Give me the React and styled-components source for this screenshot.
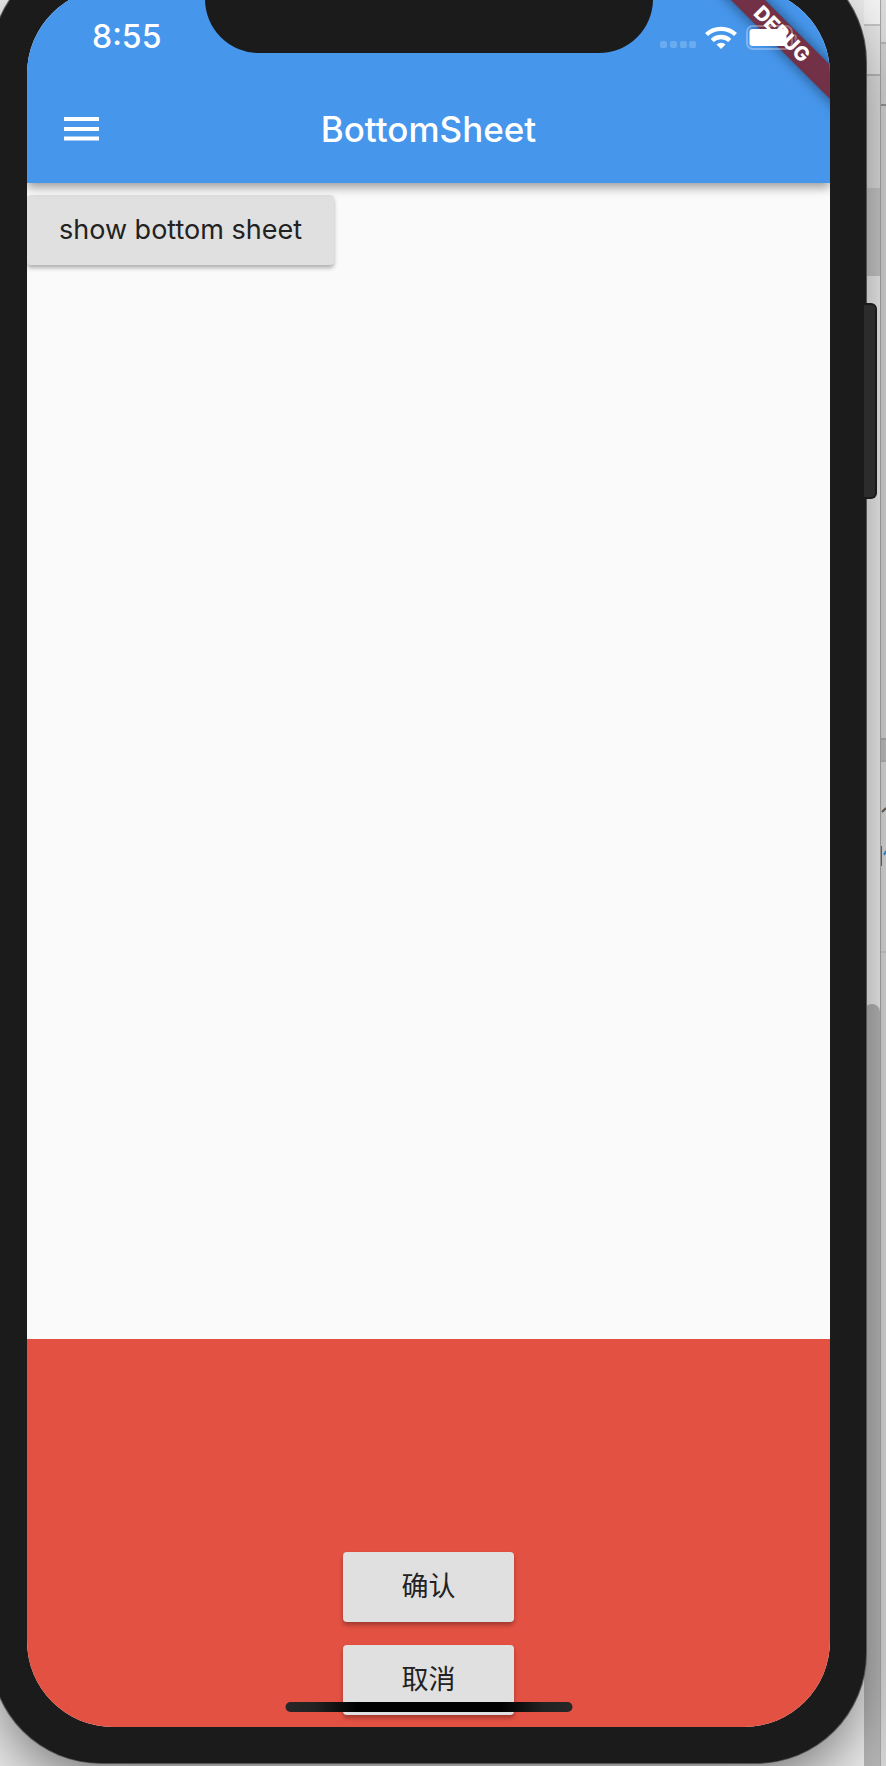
import React from 'react';
import styled, { createGlobalStyle } from 'styled-components';

const GlobalStyle = createGlobalStyle`
  *, *::before, *::after { box-sizing: border-box; }
  body { margin: 0; background: #e6e6e6; }
  button { font: inherit; border: 0; cursor: pointer; }
`;

const Desktop = styled.div`
  position: relative;
  display: flex;
  min-height: 100vh;
  overflow: hidden;
  background: #ececec;
  font-family: Inter, 'Noto Sans CJK SC', sans-serif;
`;

const Backdrop = styled.div`
  position: absolute;
  inset: 0 0 0 auto;
  display: flex;
`;

const Pane = styled.div`
  display: flex;
  flex-direction: column;
  width: ${(p) => p.$width}px;
  border-right: ${(p) => (p.$edge ? '1px solid #a5a5a5' : '0')};
  background: ${(p) => p.$color};
`;

const Block = styled.div`
  flex: ${(p) => (p.$height ? `0 0 ${p.$height}px` : '1 0 0')};
  background: ${(p) => p.$color};
  border-bottom: ${(p) => (p.$line ? `2px solid ${p.$line}` : '0')};
  border-radius: ${(p) => (p.$thumb ? '8px 8px 0 0' : '0')};
`;

const CodeEdge = styled.svg`
  flex: none;
  width: 5px;
  height: 192px;
`;

const Phone = styled.div`
  position: relative;
  display: flex;
  flex: 1;
  margin: -48px 20px 3px -9px;
  padding: 36px;
  border-radius: 110px;
  background: #1b1b1b;
  box-shadow: 0 0 0 1px #555, 0 28px 60px -8px rgba(0, 0, 0, 0.5);
`;

const SideButton = styled.div`
  position: absolute;
  top: 351px;
  right: -11px;
  width: 13px;
  height: 196px;
  border: 2px solid #1b1b1b;
  border-left: 0;
  border-radius: 0 6px 6px 0;
  background: #2c2c2c;
`;

const Screen = styled.div`
  position: relative;
  display: flex;
  flex: 1;
  flex-direction: column;
  overflow: hidden;
  border-radius: 86px;
  background: #fafafa;
`;

const Notch = styled.div`
  position: absolute;
  z-index: 2;
  top: 0;
  left: 50%;
  width: 448px;
  height: 65px;
  transform: translateX(-50%);
  border-radius: 0 0 54px 54px;
  background: #1b1b1b;
`;

const AppBar = styled.header`
  position: relative;
  z-index: 1;
  padding-top: 12px;
  color: #fff;
  background: #4696ec;
  box-shadow: 0 4px 10px rgba(0, 0, 0, 0.4);
`;

const StatusBar = styled.div`
  position: relative;
  display: flex;
  align-items: center;
  justify-content: space-between;
  height: 74px;
  padding: 0 27px 0 65px;
`;

const Time = styled.time`
  font-size: 32px;
  font-weight: 500;
  line-height: 38px;
`;

const StatusIcons = styled.svg`
  width: 150px;
  height: 36px;
`;

const Toolbar = styled.div`
  display: grid;
  grid-template-columns: 108px 1fr 108px;
  align-items: center;
  height: 109px;
`;

const MenuButton = styled.button`
  justify-self: center;
  display: flex;
  padding: 8px;
  color: inherit;
  background: none;
`;

const Title = styled.h1`
  margin: 0;
  font-size: 35px;
  font-weight: 500;
  line-height: 44px;
  text-align: center;
`;

const DebugBanner = styled.div`
  position: absolute;
  top: 34px;
  right: -62px;
  width: 220px;
  height: 24px;
  transform: rotate(45deg);
  color: #fff;
  background: rgba(122, 32, 42, 0.85);
  box-shadow: 0 0 14px rgba(0, 0, 0, 0.5);
  font-size: 20px;
  font-weight: 800;
  line-height: 24px;
  text-align: center;
`;

const Content = styled.main`
  flex: 1;
  padding-top: 12px;
`;

const RaisedButton = styled.button`
  min-width: 171px;
  height: 70px;
  padding: 0 32px;
  border-radius: 4px;
  color: #222;
  background: #e0e0e0;
  box-shadow: 0 3px 4px rgba(0, 0, 0, 0.3);
  font-size: 27px;
  line-height: 36px;
`;

const Sheet = styled.section`
  display: flex;
  flex-direction: column;
  align-items: center;
  justify-content: flex-end;
  gap: 23px;
  height: 388px;
  padding-bottom: 12px;
  background: #e35142;
`;

const HomeIndicator = styled.div`
  position: absolute;
  bottom: 15px;
  left: 50%;
  width: 287px;
  height: 10px;
  transform: translateX(-50%);
  border-radius: 5px;
  background: linear-gradient(90deg, #272727, #222 10%, #000 25%, #000 75%, #222 90%, #272727);
`;

export default function App() {
  return (
    <Desktop>
      <GlobalStyle />
      <Backdrop aria-hidden="true">
        <Pane $width={17} $edge $color="#ececec">
          <Block $height={26} $color="#f4f4f4" $line="#c5c5c5" />
          <Block $height={50} $color="#e6e6e6" $line="#b8b8b8" />
          <Block $height={112} $color="#dcdcdc" />
          <Block $height={88} $color="#c6c6c6" />
          <Block $height={728} $color="#ececec" />
          <Block $thumb $color="#b4b4b4" />
        </Pane>
        <Pane $width={5} $color="#d4d4d4">
          <Block $height={44} $color="#dcdcdc" $line="#b4b4b4" />
          <Block $height={62} $color="#d0d0d0" $line="#909090" />
          <Block $height={634} $color="#cfcfcf" $line="#a5a5a5" />
          <Block $height={22} $color="#b8b8b8" $line="#b0b0b0" />
          <CodeEdge viewBox="0 0 5 192">
            <path d="M1 50l4-4" stroke="#665c54" strokeWidth="2" />
            <path d="M0 84v20" stroke="#2878b0" strokeWidth="2" />
            <path d="M3 93l2-4" stroke="#3c8cc8" strokeWidth="2" />
            <path d="M0 190h5" stroke="#c4c4c4" strokeWidth="2" />
          </CodeEdge>
        </Pane>
      </Backdrop>
      <Phone>
        <SideButton />
        <Screen>
          <AppBar>
            <DebugBanner>DEBUG</DebugBanner>
            <StatusBar>
              <Time>8:55</Time>
              <StatusIcons viewBox="0 0 150 36" role="img" aria-label="Wi-Fi and battery">
                <g fill="#fff" fillOpacity="0.2">
                  <rect x="7" y="22" width="7" height="7" rx="2" />
                  <rect x="17" y="22" width="7" height="7" rx="2" />
                  <rect x="27" y="22" width="7" height="7" rx="2" />
                  <rect x="36" y="22" width="7" height="7" rx="2" />
                </g>
                <g fill="none" stroke="#fff" strokeWidth="4.4">
                  <path d="M53.500 15.500A21.500 21.500 0 0 1 82.500 15.500" />
                  <path d="M59.200 21.500A13 13 0 0 1 76.800 21.500" />
                </g>
                <path fill="#fff" d="M63.500 25.500a6.500 6.500 0 0 1 9 0L68 30z" />
                <rect x="94" y="7" width="45" height="23" rx="6" fill="none" stroke="#fff" strokeOpacity="0.3" strokeWidth="2" />
                <rect x="96.500" y="10" width="37" height="17" rx="3" fill="#fff" />
                <path d="M141.500 14.500q5 4 0 8z" fill="#fff" fillOpacity="0.3" />
              </StatusIcons>
            </StatusBar>
            <Toolbar>
              <MenuButton type="button" aria-label="Open menu">
                <svg width="35" height="24" viewBox="0 0 35 24" fill="currentColor">
                  <path d="M0 0h35v4H0zM0 10h35v4H0zM0 19.500h35v4H0z" />
                </svg>
              </MenuButton>
              <Title>BottomSheet</Title>
            </Toolbar>
          </AppBar>
          <Content>
            <RaisedButton type="button">show bottom sheet</RaisedButton>
          </Content>
          <Sheet>
            <RaisedButton type="button">确认</RaisedButton>
            <RaisedButton type="button">取消</RaisedButton>
          </Sheet>
          <Notch />
          <HomeIndicator />
        </Screen>
      </Phone>
    </Desktop>
  );
}
